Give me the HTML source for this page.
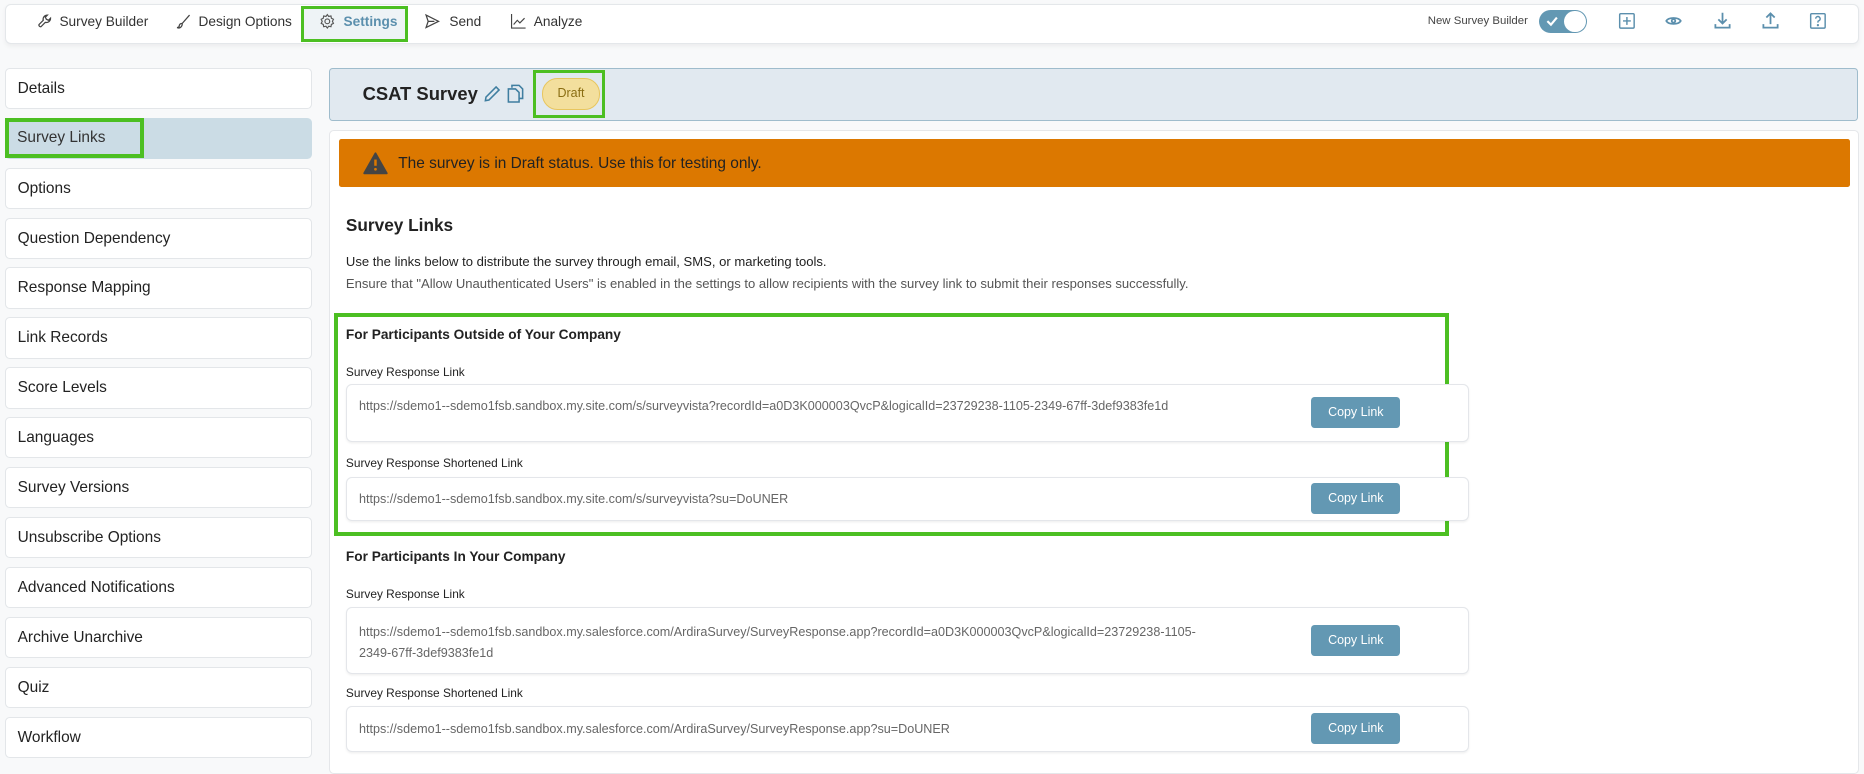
<!DOCTYPE html>
<html><head><meta charset="utf-8"><style>
html,body{margin:0;padding:0;}
body{width:1568px;height:644px;zoom:1.18878;background:#f8f9fa;font-family:"Liberation Sans",sans-serif;color:#222;position:relative;overflow:hidden;}
.a{position:absolute;white-space:nowrap;}
.top{left:4px;top:3px;width:1558px;height:32px;background:#fff;border:1px solid #e4e7ea;border-radius:5px;box-shadow:0 2px 4px rgba(0,0,0,.05);}
.nav{font-size:11.5px;color:#333;top:12px;}
.side{left:4px;width:257px;height:33px;background:#fff;border:1px solid #e3e6e9;border-radius:4px;font-size:13px;line-height:33px;text-indent:10px;color:#222;}
.box{left:291px;width:943px;background:#fff;border:1px solid #e4e6ea;border-radius:5px;box-shadow:0 1px 2px rgba(0,0,0,.06);}
.url{font-size:10.6px;color:#666;}
.btn{left:1103px;width:75px;height:26px;background:#6398b3;color:#fff;font-size:10.5px;line-height:26px;text-align:center;border-radius:3px;}
.lbl{left:291px;font-size:10px;color:#222;}
.h{left:291px;font-size:11.5px;font-weight:bold;color:#222;}
svg{position:absolute;}
</style></head><body>
<div class="a top"></div>
<svg style="left:31px;top:11px" width="14" height="14" viewBox="0 0 16 16" fill="none" stroke="#444" stroke-width="1.2"><path d="M10 2a4 4 0 0 0-4 5L2 11a1.5 1.5 0 0 0 2 2l4-4a4 4 0 0 0 5-4l-2 2-2-1-1-2z"/></svg>
<div class="a nav" style="left:50px">Survey Builder</div>
<svg style="left:147px;top:11px" width="14" height="14" viewBox="0 0 16 16" fill="none" stroke="#444" stroke-width="1.2"><path d="M14 2L7 10M7 10c-2 0-3 1-3 3-1 1-2 1-2 1 2 1 5 0 5-4z"/></svg>
<div class="a nav" style="left:167px">Design Options</div>
<div class="a" style="left:253px;top:5px;width:85px;height:25px;background:#eef3f6;border:3px solid #4cbf22"></div>
<svg style="left:268px;top:11px" width="14" height="14" viewBox="0 0 16 16" fill="none" stroke="#555" stroke-width="1.1"><circle cx="8" cy="8" r="2.3"/><path d="M8 1.5l1.3 1.8 2.2-.5.4 2.2 2 1-1 2 1 2-2 1-.4 2.2-2.2-.5L8 14.5l-1.3-1.8-2.2.5-.4-2.2-2-1 1-2-1-2 2-1 .4-2.2 2.2.5z"/></svg>
<div class="a nav" style="left:289px;color:#5b8fad;font-weight:bold">Settings</div>
<svg style="left:357px;top:11px" width="14" height="14" viewBox="0 0 16 16" fill="none" stroke="#444" stroke-width="1.2"><path d="M2 2l12 6-12 6 2-6zM4 8h6"/></svg>
<div class="a nav" style="left:378px">Send</div>
<svg style="left:429px;top:11px" width="14" height="14" viewBox="0 0 16 16" fill="none" stroke="#444" stroke-width="1.1"><path d="M1.5 1v13.5H15M3.5 11l3.5-4 2.5 2.5L14 5"/></svg>
<div class="a nav" style="left:449px">Analyze</div>
<div class="a" style="left:1201px;top:13px;font-size:9.6px;color:#444">New Survey Builder</div>
<div class="a" style="left:1295px;top:8px;width:40px;height:20px;background:#6398b3;border-radius:10px"></div>
<div class="a" style="left:1316px;top:9px;width:18px;height:18px;background:#fff;border-radius:9px"></div>
<svg style="left:1300px;top:12px" width="12" height="12" viewBox="0 0 12 12" fill="none" stroke="#fff" stroke-width="1.8"><path d="M2 6l3 3 5-6"/></svg>
<svg style="left:1361px;top:10px" width="15" height="15" viewBox="0 0 16 16" fill="none" stroke="#5b8fad" stroke-width="1.3"><rect x="1.5" y="1.5" width="13" height="13" rx="1"/><path d="M8 4.5v7M4.5 8h7"/></svg>
<svg style="left:1400px;top:10px" width="16" height="15" viewBox="0 0 16 16" fill="none" stroke="#5b8fad" stroke-width="1.6"><path d="M1.5 8c2-3.5 11-3.5 13 0-2 3.5-11 3.5-13 0z"/><circle cx="8" cy="8" r="1.6"/></svg>
<svg style="left:1441px;top:9px" width="16" height="16" viewBox="0 0 16 16" fill="none" stroke="#5b8fad" stroke-width="1.5"><path d="M8 1.5v9M4.5 7l3.5 3.5L11.5 7M2 11v3h12v-3"/></svg>
<svg style="left:1481px;top:9px" width="16" height="16" viewBox="0 0 16 16" fill="none" stroke="#5b8fad" stroke-width="1.5"><path d="M8 11V2M4.5 5.5L8 2l3.5 3.5M2 11v3h12v-3"/></svg>
<svg style="left:1522px;top:10px" width="15" height="15" viewBox="0 0 16 16" fill="none" stroke="#5b8fad" stroke-width="1.3"><rect x="1.5" y="1.5" width="13" height="13" rx="1"/><path d="M6 6a2 2 0 1 1 2.5 2c-.5.2-.5.8-.5 1.5"/><circle cx="8" cy="11.8" r=".4" fill="#5b8fad"/></svg>

<div class="a side" style="top:57px">Details</div>
<div class="a side" style="top:99px;background:#cbdce5;border-color:#cbdce5"></div>
<div class="a" style="left:4px;top:99px;width:110px;height:27px;border:4px solid #4cbf22;font-size:13px;line-height:27px;text-indent:7px;color:#333">Survey Links</div>
<div class="a side" style="top:141px">Options</div>
<div class="a side" style="top:183px">Question Dependency</div>
<div class="a side" style="top:225px">Response Mapping</div>
<div class="a side" style="top:267px">Link Records</div>
<div class="a side" style="top:309px">Score Levels</div>
<div class="a side" style="top:351px">Languages</div>
<div class="a side" style="top:393px">Survey Versions</div>
<div class="a side" style="top:435px">Unsubscribe Options</div>
<div class="a side" style="top:477px">Advanced Notifications</div>
<div class="a side" style="top:519px">Archive Unarchive</div>
<div class="a side" style="top:561px">Quiz</div>
<div class="a side" style="top:603px">Workflow</div>

<div class="a" style="left:277px;top:57px;width:1284px;height:43px;background:#e1e9f0;border:1px solid #9fbccc;border-radius:3px"></div>
<div class="a" style="left:305px;top:70px;font-size:15.5px;font-weight:bold;color:#222">CSAT Survey</div>
<svg style="left:406px;top:71px" width="16" height="16" viewBox="0 0 16 16" fill="none" stroke="#3f7ea0" stroke-width="1.3"><path d="M11 2.5l2.5 2.5L5 13.5 2 14l.5-3z"/></svg>
<svg style="left:426px;top:70px" width="16" height="18" viewBox="0 0 16 18" fill="none" stroke="#3f7ea0" stroke-width="1.3"><path d="M5 4V2h6l3 3v8h-3"/><path d="M2 5h6l3 3v8H2z"/></svg>
<div class="a" style="left:448px;top:59px;width:56px;height:35px;border:3px solid #4cbf22"></div>
<div class="a" style="left:456px;top:66px;width:47px;height:25px;background:#f3df9d;border:1px solid #e8c65e;border-radius:13px;font-size:10.5px;line-height:25px;text-align:center;color:#8a6d12">Draft</div>

<div class="a" style="left:277px;top:109px;width:1285px;height:540px;background:#fff;border:1px solid #e5e7ea;border-radius:4px"></div>
<div class="a" style="left:285px;top:117px;width:1271px;height:40px;background:#dc7800;border-radius:2px"></div>
<svg style="left:305px;top:128px" width="21" height="19" viewBox="0 0 20 18"><path d="M10 1L19 17H1z" fill="#444" stroke="#444" stroke-linejoin="round" stroke-width="1.5"/><path d="M10 6v5" stroke="#dc7800" stroke-width="2"/><circle cx="10" cy="13.8" r="1.1" fill="#dc7800"/></svg>
<div class="a" style="left:335px;top:130px;font-size:13px;color:#222">The survey is in Draft status. Use this for testing only.</div>
<div class="a" style="left:291px;top:181px;font-size:14.5px;font-weight:bold;color:#222">Survey Links</div>
<div class="a" style="left:291px;top:214px;font-size:11px;color:#222">Use the links below to distribute the survey through email, SMS, or marketing tools.</div>
<div class="a" style="left:291px;top:232px;font-size:11px;color:#555">Ensure that "Allow Unauthenticated Users" is enabled in the settings to allow recipients with the survey link to submit their responses successfully.</div>

<div class="a" style="left:281px;top:263px;width:931px;height:181px;border:4px solid #4cbf22"></div>
<div class="a h" style="top:275px">For Participants Outside of Your Company</div>
<div class="a lbl" style="top:307px">Survey Response Link</div>
<div class="a box" style="top:323px;height:47px"></div>
<div class="a url" style="left:302px;top:336px">https://sdemo1--sdemo1fsb.sandbox.my.site.com/s/surveyvista?recordId=a0D3K000003QvcP&amp;logicalId=23729238-1105-2349-67ff-3def9383fe1d</div>
<div class="a btn" style="top:334px">Copy Link</div>
<div class="a lbl" style="top:384px">Survey Response Shortened Link</div>
<div class="a box" style="top:401px;height:36px"></div>
<div class="a url" style="left:302px;top:414px">https://sdemo1--sdemo1fsb.sandbox.my.site.com/s/surveyvista?su=DoUNER</div>
<div class="a btn" style="top:406px">Copy Link</div>

<div class="a h" style="top:462px">For Participants In Your Company</div>
<div class="a lbl" style="top:494px">Survey Response Link</div>
<div class="a box" style="top:511px;height:54px"></div>
<div class="a url" style="left:302px;top:523px;line-height:18px">https://sdemo1--sdemo1fsb.sandbox.my.salesforce.com/ArdiraSurvey/SurveyResponse.app?recordId=a0D3K000003QvcP&amp;logicalId=23729238-1105-<br>2349-67ff-3def9383fe1d</div>
<div class="a btn" style="top:526px">Copy Link</div>
<div class="a lbl" style="top:577px">Survey Response Shortened Link</div>
<div class="a box" style="top:594px;height:37px"></div>
<div class="a url" style="left:302px;top:607px">https://sdemo1--sdemo1fsb.sandbox.my.salesforce.com/ArdiraSurvey/SurveyResponse.app?su=DoUNER</div>
<div class="a btn" style="top:600px">Copy Link</div>
</body></html>
